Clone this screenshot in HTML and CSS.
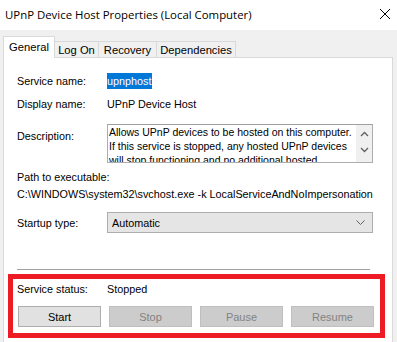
FILE: index.html
```html
<!DOCTYPE html>
<html>
<head>
<meta charset="utf-8">
<link rel="stylesheet" href="styles.css">
</head>
<body>
<div class="window">
  <div class="titlebar">
    <span class="title">UPnP Device Host Properties (Local Computer)</span>
    <svg class="close" width="12" height="12" viewBox="0 0 12 12"><path d="M1 1 L11 11 M11 1 L1 11" stroke="#000" stroke-width="1" fill="none"/></svg>
  </div>
  <div class="tabs">
    <div class="tab active w-general">General</div>
    <div class="tab w-logon">Log On</div>
    <div class="tab w-recovery">Recovery</div>
    <div class="tab w-deps">Dependencies</div>
  </div>
  <div class="panel">
    <div class="form">
      <div class="row r-name"><span class="label">Service name:</span><span class="value"><span class="sel">upnphost</span></span></div>
      <div class="row r-display"><span class="label">Display name:</span><span class="value">UPnP Device Host</span></div>
      <div class="row r-desc">
        <span class="label desc-label">Description:</span>
        <div class="textbox">
          <div class="tb-text">Allows UPnP devices to be hosted on this computer.<br>If this service is stopped, any hosted UPnP devices<br>will stop functioning and no additional hosted<br>UPnP devices can be added.</div>
          <div class="scrollbar">
            <svg width="9" height="6" viewBox="0 0 9 6"><path d="M1 5 L4.5 1.5 L8 5" stroke="#606060" stroke-width="1.3" fill="none"/></svg>
            <svg width="9" height="6" viewBox="0 0 9 6"><path d="M1 1 L4.5 4.5 L8 1" stroke="#606060" stroke-width="1.3" fill="none"/></svg>
          </div>
        </div>
      </div>
      <div class="line p-label">Path to executable:</div>
      <div class="line p-value">C:\WINDOWS\system32\svchost.exe -k LocalServiceAndNoImpersonation</div>
      <div class="row r-startup">
        <span class="label">Startup type:</span>
        <div class="combo"><span>Automatic</span>
          <svg width="9" height="5" viewBox="0 0 9 5"><path d="M0.5 0.5 L4.5 4.5 L8.5 0.5" stroke="#606060" stroke-width="1" fill="none"/></svg>
        </div>
      </div>
      <div class="separator"></div>
    </div>
    <div class="status-box">
      <div class="row r-status"><span class="label">Service status:</span><span class="value">Stopped</span></div>
      <div class="buttons">
        <button class="btn">Start</button>
        <button class="btn disabled">Stop</button>
        <button class="btn disabled">Pause</button>
        <button class="btn disabled">Resume</button>
      </div>
    </div>
  </div>
</div>
</body>
</html>
```
FILE: styles.css
```css
html, body {
  margin: 0;
  padding: 0;
}
body {
  width: 397px;
  height: 342px;
  overflow: hidden;
  background: #f0f0f0;
  font-family: "Liberation Sans", Arial, sans-serif;
  font-size: 10.8px;
  color: #000;
}
.titlebar {
  height: 30px;
  background: #fff;
  display: flex;
  align-items: center;
  justify-content: space-between;
  padding: 0 6px 0 5px;
}
.title {
  font-family: "Open Sans", "Noto Sans", sans-serif;
  font-size: 11.4px;
  margin-top: -1px;
}
.close {
  margin-top: -2px;
}
.tabs {
  height: 27px;
  display: flex;
  align-items: flex-end;
  padding-left: 3px;
}
.tab {
  box-sizing: border-box;
  height: 16px;
  border: 1px solid #d9d9d9;
  border-bottom: none;
  background: #f0f0f0;
  display: flex;
  align-items: center;
  justify-content: center;
  font-size: 11.2px;
  margin-left: -1px;
}
.tab.active {
  height: 22px;
  margin-bottom: -1px;
  margin-left: 0;
  background: #fff;
  position: relative;
  z-index: 1;
  align-items: flex-start;
  padding-top: 4px;
}
.w-general { width: 52px; }
.w-logon { width: 45px; }
.w-recovery { width: 59px; }
.w-deps { width: 80px; }
.panel {
  box-sizing: border-box;
  margin-left: 3px;
  width: 390px;
  height: 300px;
  background: #fff;
  border: 1px solid #d9d9d9;
}
.form {
  padding-left: 13px;
}
.row {
  display: flex;
  align-items: flex-start;
}
.label {
  width: 90px;
  flex: none;
  line-height: 16px;
}
.value {
  line-height: 16px;
}
.sel {
  background: #0078d7;
  color: #fff;
  padding: 0 1px 0 0;
  display: inline-block;
}
.r-name { margin-top: 15px; }
.r-display { margin-top: 7px; }
.r-desc { margin-top: 12px; }
.desc-label { padding-top: 4px; }
.textbox {
  box-sizing: border-box;
  width: 266px;
  height: 39px;
  border: 1px solid #adadad;
  border-top-color: #a0a0a0;
  display: flex;
  overflow: hidden;
}
.tb-text {
  flex: 1;
  padding: 0 0 0 1px;
  line-height: 14px;
  font-size: 10.5px;
  white-space: nowrap;
  overflow: hidden;
}
.scrollbar {
  width: 16px;
  flex: none;
  background: #f0f0f0;
  display: flex;
  flex-direction: column;
  align-items: center;
  justify-content: space-between;
  padding: 6px 0 9px;
  box-sizing: border-box;
}
.line { line-height: 16px; }
.p-label { margin-top: 6px; }
.p-value { margin-top: 1px; white-space: nowrap; }
.r-startup { margin-top: 10px; align-items: center; }
.combo {
  box-sizing: border-box;
  width: 266px;
  height: 21px;
  background: #e5e5e5;
  border: 1px solid #adadad;
  display: flex;
  align-items: center;
  justify-content: space-between;
  padding: 0 7px 0 4px;
}
.separator {
  margin-top: 36px;
  width: 353px;
  height: 1px;
  background: #a0a0a0;
}
.status-box {
  box-sizing: border-box;
  margin: 4px 0 0 4px;
  width: 377px;
  height: 64px;
  border: 5px solid #ed1c24;
  padding: 2px 0 0 4px;
}
.buttons {
  display: flex;
  gap: 8px;
  margin-top: 9px;
  padding-left: 1px;
}
.btn {
  box-sizing: border-box;
  width: 83px;
  height: 21px;
  background: #e1e1e1;
  border: 1px solid #adadad;
  font-family: "Liberation Sans", Arial, sans-serif;
  font-size: 11px;
  color: #000;
  padding: 0;
  margin: 0;
}
.btn.disabled {
  background: #cccccc;
  border-color: #bfbfbf;
  color: #838383;
}
```
